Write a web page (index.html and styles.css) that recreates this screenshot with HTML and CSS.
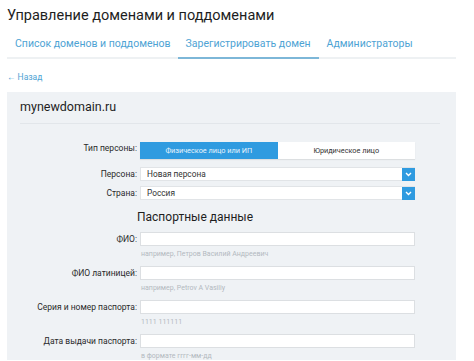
FILE: index.html
```html
<!DOCTYPE html>
<html lang="ru">
<head>
<meta charset="utf-8">
<link rel="stylesheet" href="styles.css">
</head>
<body>
<div class="page">
  <h1 class="title">Управление доменами и поддоменами</h1>
  <nav class="tabs">
    <a class="tab">Список доменов и поддоменов</a>
    <a class="tab active">Зарегистрировать домен</a>
    <a class="tab">Администраторы</a>
  </nav>
  <a class="back">← Назад</a>
  <section class="panel">
    <h2 class="domain">mynewdomain.ru</h2>
    <div class="form">
      <div class="row">
        <label class="label">Тип персоны:</label>
        <div class="segmented">
          <span class="seg on">Физическое лицо или ИП</span>
          <span class="seg">Юридическое лицо</span>
        </div>
      </div>
      <div class="row row-sel1">
        <label class="label">Персона:</label>
        <div class="select"><span>Новая персона</span><i class="chev"><svg width="7" height="5" viewBox="0 0 7 5"><path d="M1 1l2.5 2.5L6 1" fill="none" stroke="#fff" stroke-width="1.4"/></svg></i></div>
      </div>
      <div class="row row-sel2">
        <label class="label">Страна:</label>
        <div class="select"><span>Россия</span><i class="chev"><svg width="7" height="5" viewBox="0 0 7 5"><path d="M1 1l2.5 2.5L6 1" fill="none" stroke="#fff" stroke-width="1.4"/></svg></i></div>
      </div>
      <h3 class="section">Паспортные данные</h3>
      <div class="row field">
        <label class="label">ФИО:</label>
        <div class="ctl"><div class="input"></div><div class="hint">например, Петров Василий Андреевич</div></div>
      </div>
      <div class="row field">
        <label class="label">ФИО латиницей:</label>
        <div class="ctl"><div class="input"></div><div class="hint">например, Petrov A Vasiliy</div></div>
      </div>
      <div class="row field">
        <label class="label">Серия и номер паспорта:</label>
        <div class="ctl"><div class="input"></div><div class="hint">1111 111111</div></div>
      </div>
      <div class="row field">
        <label class="label">Дата выдачи паспорта:</label>
        <div class="ctl"><div class="input"></div><div class="hint">в формате гггг-мм-дд</div></div>
      </div>
    </div>
  </section>
</div>
</body>
</html>
```

FILE: styles.css
```css
* { box-sizing: border-box; }
html, body { margin: 0; padding: 0; background: #fff; }
body { font-family: Roboto, "Noto Sans", sans-serif; color: #222; overflow: hidden; }
.page { width: 449px; margin-left: 7px; }
.title { font-size: 14.5px; font-weight: 400; margin: 0; padding-top: 5px; line-height: 22px; color: #1e1e1e; white-space: nowrap; }
.tabs { display: flex; margin-top: 9px; border-bottom: 2px solid #eef1f3; white-space: nowrap; }
.tab { font-size: 10.5px; line-height: 16px; color: #4ea3d4; padding: 0 8px 5px; margin-bottom: -2px; border-bottom: 2px solid transparent; }
.tab:first-child { padding-right: 7px; }
.tab.active { border-bottom-color: #7db7d8; }
.back { display: block; font-size: 8.5px; line-height: 12px; color: #4ea3d4; margin-top: 12px; }
.panel { background: #eff2f5; margin-top: 9px; padding: 6px 16px 10px 13px; height: 268px; }
.domain { font-size: 12.5px; font-weight: 400; margin: 0; line-height: 18px; padding-bottom: 7px; border-bottom: 1px solid #e2e6ea; color: #1e1e1e; }
.form { padding-top: 18px; }
.row { display: flex; align-items: flex-start; }
.label { width: 120px; text-align: right; font-size: 8.5px; color: #2a2a2a; padding-right: 3px; line-height: 14px; flex: none; white-space: nowrap; }
.segmented { display: flex; width: 275px; height: 17px; background: #fff; box-shadow: 0 1px 1px rgba(0,0,0,0.08); }
.seg { flex: 1; font-size: 7.3px; line-height: 17px; text-align: center; color: #333; }
.seg.on { background: #2f9be0; color: #e8f4fc; }
.row:first-child .label { line-height: 12px; }
.row-sel1 { margin-top: 8px; }
.row-sel2 { margin-top: 5px; }
.select { width: 275px; height: 14px; background: #fff; border: 1px solid #e1e4e7; display: flex; align-items: center; justify-content: space-between; font-size: 8.3px; padding-left: 6px; color: #333; }
.chev { width: 13px; height: 13px; background: #2f9be0; display: flex; align-items: center; justify-content: center; margin-right: -1px; }
.chev svg { display: block; }
.section { font-size: 12px; font-weight: 400; margin: 0; padding-left: 117px; line-height: 18px; padding-top: 8px; padding-bottom: 6px; color: #1e1e1e; }
.ctl { width: 275px; }
.input { height: 14px; background: #fff; border: 1px solid #dcdfe2; }
.hint { font-size: 7px; color: #b3b9bf; line-height: 10px; margin-top: 3px; margin-bottom: 7px; padding-left: 1px; white-space: nowrap; }
```
